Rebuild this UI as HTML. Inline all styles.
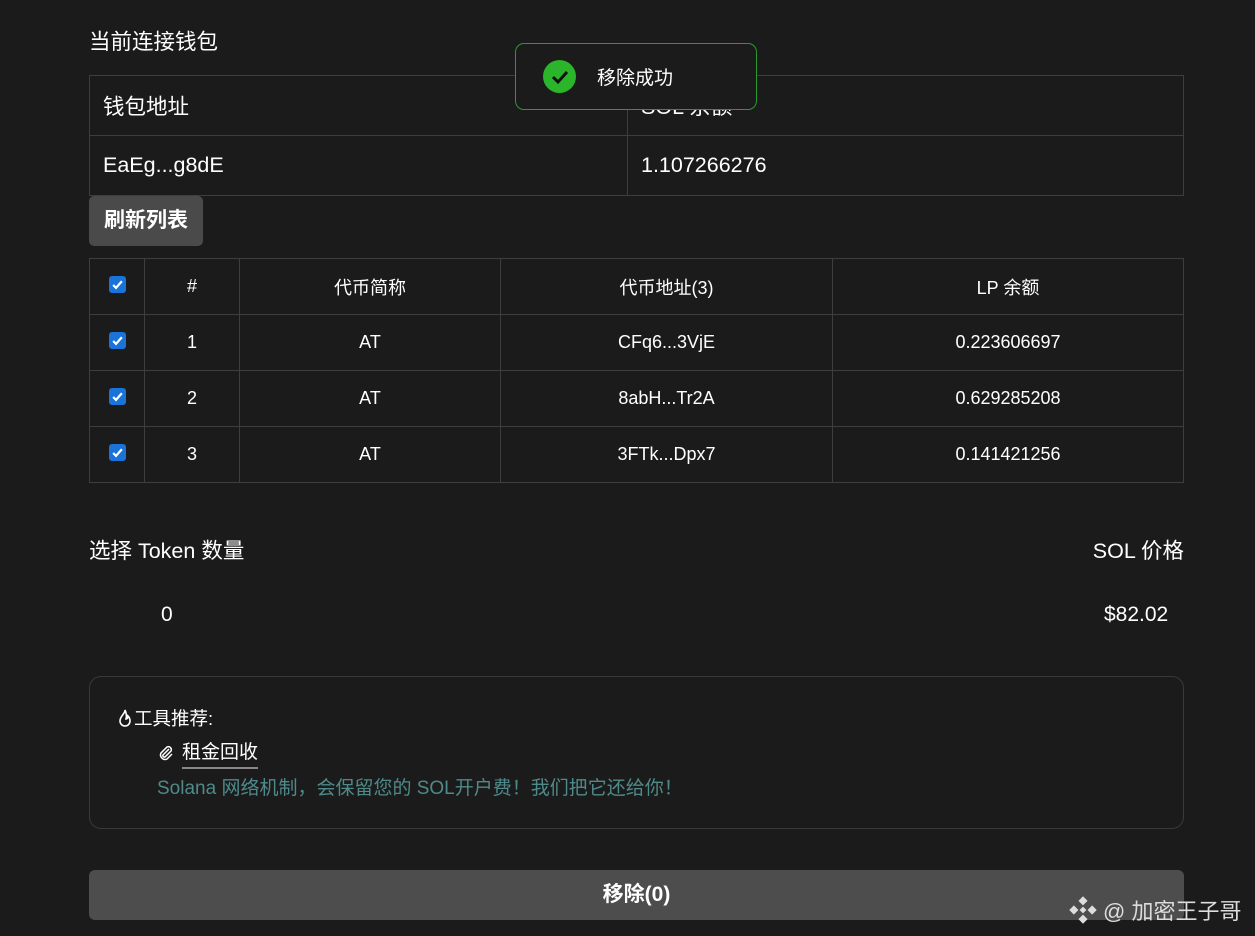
<!DOCTYPE html>
<html><head><meta charset="utf-8"><style>
*{box-sizing:border-box;margin:0;padding:0}
body{width:1255px;height:936px;background:#1b1b1b;color:#fff;font-family:"Liberation Sans","Noto Sans CJK SC",sans-serif;position:relative;overflow:hidden}
.a{position:absolute}
table{border-collapse:collapse;position:absolute;left:89px;width:1095px}
td{border:1px solid #3e3e3e;font-size:18px}
.t1 td{height:60px;padding-left:13px;font-size:21.5px}
.t2 td{height:56px;text-align:center}
.cb{display:inline-block;width:17px;height:17px;background:#1a73d9;border-radius:3px;position:relative;vertical-align:middle;top:-3px}
.cb svg{position:absolute;left:2px;top:2px}
</style></head><body>
<div class="a" style="left:89px;top:25px;font-size:21.5px">当前连接钱包</div>
<table class="t1" style="top:75px">
<tr><td style="width:538px">钱包地址</td><td>SOL 余额</td></tr>
<tr><td>EaEg...g8dE</td><td>1.107266276</td></tr>
</table>
<div class="a" style="left:89px;top:196px;width:114px;height:50px;background:#4a4a4a;border-radius:5px;font-size:21px;font-weight:bold;line-height:50px;text-align:center">刷新列表</div>
<table class="t2" style="top:258px">
<tr><td style="width:55px"><span class="cb"><svg width="13" height="13" viewBox="0 0 12 12"><path d="M2 6.5l2.6 2.6L10 3" stroke="#fff" stroke-width="2" fill="none"/></svg></span></td><td style="width:95px">#</td><td style="width:261px">代币简称</td><td style="width:332px">代币地址(3)</td><td>LP 余额</td></tr>
<tr><td><span class="cb"><svg width="13" height="13" viewBox="0 0 12 12"><path d="M2 6.5l2.6 2.6L10 3" stroke="#fff" stroke-width="2" fill="none"/></svg></span></td><td>1</td><td>AT</td><td>CFq6...3VjE</td><td>0.223606697</td></tr>
<tr><td><span class="cb"><svg width="13" height="13" viewBox="0 0 12 12"><path d="M2 6.5l2.6 2.6L10 3" stroke="#fff" stroke-width="2" fill="none"/></svg></span></td><td>2</td><td>AT</td><td>8abH...Tr2A</td><td>0.629285208</td></tr>
<tr><td><span class="cb"><svg width="13" height="13" viewBox="0 0 12 12"><path d="M2 6.5l2.6 2.6L10 3" stroke="#fff" stroke-width="2" fill="none"/></svg></span></td><td>3</td><td>AT</td><td>3FTk...Dpx7</td><td>0.141421256</td></tr>
</table>
<div class="a" style="left:89px;top:534px;font-size:21.5px">选择 Token 数量</div>
<div class="a" style="right:71px;top:534px;font-size:21.5px">SOL 价格</div>
<div class="a" style="left:161px;top:603px;font-size:21px">0</div>
<div class="a" style="left:1104px;top:603px;font-size:21px">$82.02</div>
<div class="a" style="left:89px;top:676px;width:1095px;height:153px;border:1px solid #3a3a3a;border-radius:12px"></div>
<div class="a" style="left:116px;top:705px;font-size:18.5px;display:flex;align-items:center"><svg width="18" height="20" viewBox="0 0 18 20"><path d="M9 2c0 4-5 6-5 11a5 5 0 0010 0c0-2-1-4-2-5 0 2-1 3-2 3 1-3 0-7-1-9z" stroke="#fff" stroke-width="1.6" fill="none"/></svg>工具推荐:</div>
<div class="a" style="left:157px;top:737px;font-size:19px;display:flex;align-items:center"><svg width="18" height="18" viewBox="0 0 18 18"><path d="M12 5l-6 6a1.5 1.5 0 002 2l6-6a3 3 0 00-4-4l-6 6a4.5 4.5 0 006 6l5-5" stroke="#fff" stroke-width="1.5" fill="none"/></svg><span style="margin-left:7px;border-bottom:2px solid #888;padding-bottom:3px">租金回收</span></div>
<div class="a" style="left:157px;top:773px;font-size:19px;color:#4f8a8a">Solana 网络机制，会保留您的 SOL开户费！我们把它还给你！</div>
<div class="a" style="left:89px;top:870px;width:1095px;height:50px;background:#4d4d4d;border-radius:6px;text-align:center;line-height:50px;font-size:21px;font-weight:bold">移除(0)</div>
<div class="a" style="left:515px;top:43px;width:242px;height:67px;background:#1b1b1b;border:1px solid #2c9a2c;border-radius:9px">
<div class="a" style="left:27px;top:16px;width:33px;height:33px;border-radius:50%;background:#2ab52a"><svg width="33" height="33" viewBox="0 0 33 33"><path d="M10 17l5 5 9-10" stroke="#111" stroke-width="3" fill="none"/></svg></div>
<div class="a" style="left:81px;top:19px;font-size:19px">移除成功</div></div>
<div class="a" style="left:1067px;top:894px;font-size:22px;color:#ddd;display:flex;align-items:center"><svg width="32" height="32" viewBox="0 0 28 28" fill="#ddd"><path d="M14 2l4 4-4 4-4-4zM14 18l4 4-4 4-4-4zM6 10l4 4-4 4-4-4zM22 10l4 4-4 4-4-4zM14 11l3 3-3 3-3-3z"/></svg><span style="margin-left:4px">@ 加密王子哥</span></div>
</body></html>
